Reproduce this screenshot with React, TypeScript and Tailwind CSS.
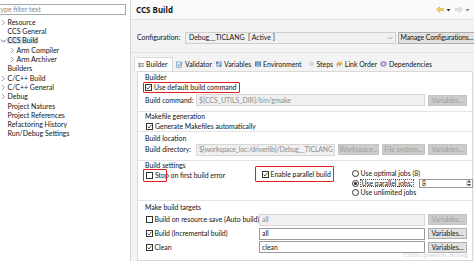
import React from 'react';

const treeItems = [
  { label: 'Resource', arrow: 'right', level: 0 },
  { label: 'CCS General', arrow: '', level: 0 },
  { label: 'CCS Build', arrow: 'down', level: 0, selected: true },
  { label: 'Arm Compiler', arrow: 'right', level: 1 },
  { label: 'Arm Archiver', arrow: 'right', level: 1 },
  { label: 'Builders', arrow: '', level: 0 },
  { label: 'C/C++ Build', arrow: 'right', level: 0 },
  { label: 'C/C++ General', arrow: 'right', level: 0 },
  { label: 'Debug', arrow: 'right', level: 0 },
  { label: 'Project Natures', arrow: '', level: 0 },
  { label: 'Project References', arrow: '', level: 0 },
  { label: 'Refactoring History', arrow: '', level: 0 },
  { label: 'Run/Debug Settings', arrow: '', level: 0 },
];

const Arrow = ({ dir }: { dir: string }) => {
  if (!dir) return <span className="w-[7px] shrink-0" />;
  return (
    <svg width="7" height="7" viewBox="0 0 7 7" className="shrink-0">
      {dir === 'right' ? (
        <path d="M2 1 L4.5 3.5 L2 6" fill="none" stroke="#8a8a8a" strokeWidth="0.8" />
      ) : (
        <path d="M1 2.5 L3.5 5 L6 2.5" fill="none" stroke="#444" strokeWidth="0.8" />
      )}
    </svg>
  );
};

const Check = ({ checked }: { checked?: boolean }) => (
  <span className="w-[7px] h-[7px] border border-[#333] bg-white shrink-0 flex items-center justify-center">
    {checked && (
      <svg width="5" height="5" viewBox="0 0 5 5">
        <path d="M0.6 2.6 L2 4 L4.5 0.8" fill="none" stroke="#222" strokeWidth="0.8" />
      </svg>
    )}
  </span>
);

const Radio = ({ on }: { on?: boolean }) => (
  <span className="w-[7px] h-[7px] rounded-full border border-[#333] bg-white shrink-0 flex items-center justify-center">
    {on && <span className="w-[3px] h-[3px] rounded-full bg-[#222]" />}
  </span>
);

const Btn = ({ label, disabled, w }: { label: string; disabled?: boolean; w: string }) => (
  <div
    className={`${w} h-[11px] shrink-0 flex items-center justify-center border ${
      disabled ? 'bg-[#cccccc] border-[#c4c4c4] text-[#a0a0a0]' : 'bg-[#e1e1e1] border-[#adadad] text-[#1a1a1a]'
    }`}
  >
    {label}
  </div>
);

const Field = ({ value, disabled, w, tight }: { value: string; disabled?: boolean; w: string; tight?: boolean }) => (
  <div
    className={`${w} h-[12px] shrink-0 flex items-center px-[2px] border overflow-hidden whitespace-nowrap ${
      tight ? 'tracking-[-0.15px]' : ''
    } ${disabled ? 'bg-[#f0f0f0] border-[#d6d6d6] text-[#8d8d8d]' : 'bg-white border-[#9a9a9a] text-[#1a1a1a]'}`}
  >
    {value}
  </div>
);

const TabIcon = ({ kind }: { kind: string }) => {
  switch (kind) {
    case 'builder':
      return (
        <svg width="6" height="6" viewBox="0 0 6 6">
          <path d="M0 1.5 H6 M0 3 H6 M0 4.5 H6 M1.5 0.5 V5.5" stroke="#8f8f8f" strokeWidth="0.8" />
        </svg>
      );
    case 'validator':
      return (
        <svg width="7" height="7" viewBox="0 0 7 7">
          <rect x="0.5" y="1" width="5" height="5.5" fill="#dfe9f5" stroke="#6a8fbf" strokeWidth="0.6" />
          <path d="M1.5 3.8 L3 5 L6.5 1" fill="none" stroke="#3d7ac0" strokeWidth="0.8" />
        </svg>
      );
    case 'variables':
      return (
        <svg width="6" height="6" viewBox="0 0 6 6">
          <rect x="0" y="0.5" width="2.6" height="2.4" fill="#5a8bc8" />
          <rect x="3.2" y="0.5" width="2.6" height="2.4" fill="#8fb2dd" />
          <rect x="0" y="3.4" width="2.6" height="2.4" fill="#8fb2dd" />
          <rect x="3.2" y="3.4" width="2.6" height="2.4" fill="#5a8bc8" />
        </svg>
      );
    case 'env':
      return (
        <svg width="6" height="6" viewBox="0 0 6 6">
          <rect x="0" y="0.5" width="6" height="5" fill="#4f79b5" />
          <path d="M0.8 2 H5.2 M0.8 3.2 H5.2 M0.8 4.4 H5.2" stroke="#cfe0f5" strokeWidth="0.6" />
        </svg>
      );
    case 'steps':
      return (
        <svg width="7" height="6" viewBox="0 0 7 6">
          <path d="M0.5 1 L3 3 L0.5 5 M3.5 1 L6 3 L3.5 5" fill="none" stroke="#8a8a8a" strokeWidth="0.7" />
        </svg>
      );
    case 'link':
      return (
        <svg width="7" height="6" viewBox="0 0 7 6">
          <path d="M1 5.5 L3 0.5 M3.5 5.5 L5.5 0.5" stroke="#d9a321" strokeWidth="1.1" />
          <path d="M0.5 3 H6.5" stroke="#c0632a" strokeWidth="0.7" />
        </svg>
      );
    default:
      return (
        <svg width="7" height="6" viewBox="0 0 7 6">
          <ellipse cx="3.5" cy="3" rx="3" ry="2.4" fill="#b9a6d9" stroke="#7a68a8" strokeWidth="0.5" />
          <circle cx="3.5" cy="3" r="0.9" fill="#f2eef9" />
        </svg>
      );
  }
};

const tabs = [
  { label: 'Builder', kind: 'builder', w: 'w-[39px]' },
  { label: 'Validator', kind: 'validator', w: 'w-[40px]' },
  { label: 'Variables', kind: 'variables', w: 'w-[39px]' },
  { label: 'Environment', kind: 'env', w: 'w-[54px]' },
  { label: 'Steps', kind: 'steps', w: 'w-[27px]' },
  { label: 'Link Order', kind: 'link', w: 'w-[44px]' },
  { label: 'Dependencies', kind: 'deps', w: 'w-[58px]' },
];

export default function App() {
  return (
    <div className="w-[474px] h-[261px] flex overflow-hidden bg-white text-[6.9px] leading-none text-[#141414] font-['Lato',sans-serif] relative">
      {/* Left: property tree */}
      <div className="w-[131px] shrink-0 bg-white border-r border-[#d4d4d4] flex flex-col">
        <div className="mt-[4px] ml-[-6px] w-[132px] h-[11px] border border-[#a9a9a9] flex items-center pl-[3px] text-[#8a8a8a] shrink-0">
          type filter text
        </div>
        <div className="mt-[2.7px] flex flex-col text-[7px]">
          {treeItems.map((it) => (
            <div
              key={it.label}
              className={`h-[9.3px] flex items-center whitespace-nowrap ${it.level === 1 ? 'pl-[9px]' : 'pl-0'}`}
            >
              <Arrow dir={it.arrow} />
              <span className={`px-[0.5px] ${it.selected ? 'bg-[#d5e7f7]' : ''}`}>{it.label}</span>
            </div>
          ))}
        </div>
      </div>

      {/* Right: page */}
      <div className="flex-1 flex flex-col bg-[#f3f3f3] overflow-hidden">
        {/* Title */}
        <div className="h-[20px] shrink-0 bg-[#fafafa] border-b border-[#e2e2e2] flex items-center justify-between pl-[5px] pr-[4px]">
          <span className="font-bold text-[8px] text-[#1a1a1a] font-['Noto_Sans',sans-serif]">CCS Build</span>
          <div className="flex items-center gap-[2px]">
            <svg width="8" height="7" viewBox="0 0 8 7">
              <path d="M0.5 3.5 L3.5 0.8 V2.3 H7.5 V4.7 H3.5 V6.2 Z" fill="#f6d36a" stroke="#c9a02a" strokeWidth="0.5" />
            </svg>
            <svg width="5" height="4" viewBox="0 0 5 4">
              <path d="M0.5 1 H4.5 L2.5 3.5 Z" fill="#333" />
            </svg>
            <svg width="8" height="7" viewBox="0 0 8 7" className="ml-[2px]">
              <path d="M7.5 3.5 L4.5 0.8 V2.3 H0.5 V4.7 H4.5 V6.2 Z" fill="#e6e6e6" stroke="#b5b5b5" strokeWidth="0.5" />
            </svg>
            <svg width="5" height="4" viewBox="0 0 5 4">
              <path d="M0.5 1 H4.5 L2.5 3.5 Z" fill="#888" />
            </svg>
          </div>
        </div>

        {/* Configuration */}
        <div className="h-[33px] shrink-0 pt-[3px] border-b border-[#e2e2e2] flex items-center pl-[6px] whitespace-nowrap">
          <span className="w-[48px] shrink-0">Configuration:</span>
          <div className="w-[211px] h-[12px] shrink-0 border border-[#cfcfcf] bg-[#f0f0f0] flex items-center justify-between pl-[3px] pr-[2px]">
            <span>Debug__TICLANG&nbsp; [ Active ]</span>
            <svg width="5" height="4" viewBox="0 0 5 4">
              <path d="M0.5 1 L2.5 3 L4.5 1" fill="none" stroke="#777" strokeWidth="0.6" />
            </svg>
          </div>
          <div className="ml-[2px] w-[80px] h-[12px] shrink-0 border border-[#adadad] bg-[#e1e1e1] flex items-center pl-[1.5px] tracking-[-0.1px]">
            Manage Configurations...
          </div>
        </div>

        {/* Tabs */}
        <div className="mt-[4px] h-[14px] shrink-0 flex items-stretch pl-[3px] whitespace-nowrap">
          {tabs.map((t, i) => (
            <div
              key={t.label}
              className={`${t.w} shrink-0 flex items-center gap-[2px] pl-[3px] ${
                i === 0 ? 'bg-white border border-b-0 border-[#d9d9d9]' : ''
              }`}
            >
              <TabIcon kind={t.kind} />
              <span>{t.label}</span>
            </div>
          ))}
        </div>

        {/* Tab content */}
        <div className="ml-[6px] mr-[1px] flex-1 bg-white border border-[#d9d9d9] flex flex-col whitespace-nowrap">
          {/* Builder */}
          <div className="flex flex-col pl-[7px] pb-[5px]">
            <div className="h-[11px] flex items-center">Builder</div>
            <div className="h-[8px] flex items-center">
              <div className="flex items-center gap-[2px] border-[1.5px] border-[#e02020] rounded-[1px] h-[11px] pl-[1.5px] pr-[3px] ml-[-2.5px]">
                <Check checked />
                <span>Use default build command</span>
              </div>
            </div>
            <div className="mt-[3px] h-[12px] flex items-center">
              <span className="w-[51px] shrink-0">Build command:</span>
              <Field value="${CCS_UTILS_DIR}/bin/gmake" disabled w="w-[229px]" />
              <div className="ml-[3px]">
                <Btn label="Variables..." disabled w="w-[39px]" />
              </div>
            </div>
          </div>

          {/* Makefile generation */}
          <div className="border-t border-[#e3e3e3] flex flex-col pl-[7px]">
            <div className="h-[9px] flex items-center">Makefile generation</div>
            <div className="h-[10px] flex items-center gap-[2px] pl-[1px]">
              <Check checked />
              <span>Generate Makefiles automatically</span>
            </div>
          </div>

          {/* Build location */}
          <div className="border-t border-[#e3e3e3] flex flex-col pl-[7px] pb-[5px]">
            <div className="h-[12px] flex items-center">Build location</div>
            <div className="h-[11px] flex items-center">
              <span className="w-[51px] shrink-0">Build directory:</span>
              <Field value="${workspace_loc:/driverlib}/Debug__TICLANG" disabled tight w="w-[139px]" />
              <div className="ml-[3px]">
                <Btn label="Workspace..." disabled w="w-[41px]" />
              </div>
              <div className="ml-[3px]">
                <Btn label="File system..." disabled w="w-[43px]" />
              </div>
              <div className="ml-[3px]">
                <Btn label="Variables..." disabled w="w-[39px]" />
              </div>
            </div>
          </div>

          {/* Build settings */}
          <div className="border-t border-[#e3e3e3] flex flex-col pl-[7px] pb-[2.5px]">
            <div className="h-[8px] flex items-center">Build settings</div>
            <div className="flex">
              <div className="w-[110px] shrink-0 h-[12px] flex items-center gap-[2px] pl-[1px] relative">
                <Check />
                <span>Stop on first build error</span>
                <span className="absolute left-[-2px] top-[0px] w-[24px] h-[13px] border-[1.5px] border-[#e02020] rounded-[1px]" />
              </div>
              <div className="w-[79px] shrink-0 h-[16px] mt-[-3px] border-[1.5px] border-[#e02020] rounded-[1px] flex items-center gap-[2px] pl-[5.5px]">
                <Check checked />
                <span>Enable parallel build</span>
              </div>
              <div className="ml-[18px] flex flex-col">
                <div className="h-[9.5px] flex items-center gap-[1.5px]">
                  <Radio />
                  <span>Use optimal jobs (8)</span>
                </div>
                <div className="h-[9.5px] flex items-center">
                  <Radio on />
                  <span className="ml-[1px] border border-dotted border-[#555] px-[0.5px] h-[8px] flex items-center">
                    Use parallel jobs:
                  </span>
                  <div className="ml-[5px] w-[54px] h-[9px] border border-[#9a9a9a] bg-white flex items-center justify-between pl-[2px]">
                    <span>8</span>
                    <div className="w-[6px] h-full border-l border-[#d0d0d0] flex flex-col items-center justify-center gap-[1px]">
                      <svg width="4" height="2.5" viewBox="0 0 4 2.5">
                        <path d="M0 2.5 L2 0 L4 2.5 Z" fill="#444" />
                      </svg>
                      <svg width="4" height="2.5" viewBox="0 0 4 2.5">
                        <path d="M0 0 L2 2.5 L4 0 Z" fill="#444" />
                      </svg>
                    </div>
                  </div>
                </div>
                <div className="h-[9.5px] flex items-center gap-[1.5px]">
                  <Radio />
                  <span>Use unlimited jobs</span>
                </div>
              </div>
            </div>
          </div>

          {/* Make build targets */}
          <div className="border-t border-[#e3e3e3] flex flex-col pl-[7px]">
            <div className="h-[12px] flex items-center">Make build targets</div>
            {[
              { label: 'Build on resource save (Auto build)', value: 'all', checked: false, disabled: true },
              { label: 'Build (Incremental build)', value: 'all', checked: true, disabled: false },
              { label: 'Clean', value: 'clean', checked: true, disabled: false },
            ].map((r) => (
              <div key={r.label} className="h-[13.7px] flex items-center">
                <div className="w-[114px] shrink-0 flex items-center gap-[1.5px] pl-[1px]">
                  <Check checked={r.checked} />
                  <span>{r.label}</span>
                </div>
                <Field value={r.value} disabled={r.disabled} w="w-[166px]" />
                <div className="ml-[3px]">
                  <Btn label="Variables..." disabled={r.disabled} w="w-[39px]" />
                </div>
              </div>
            ))}
          </div>
        </div>
      </div>

      <span className="absolute right-[6px] bottom-[3px] text-[6.5px] text-[#d4d4d4]">CSDN @weixin_ticlang</span>
    </div>
  );
}
